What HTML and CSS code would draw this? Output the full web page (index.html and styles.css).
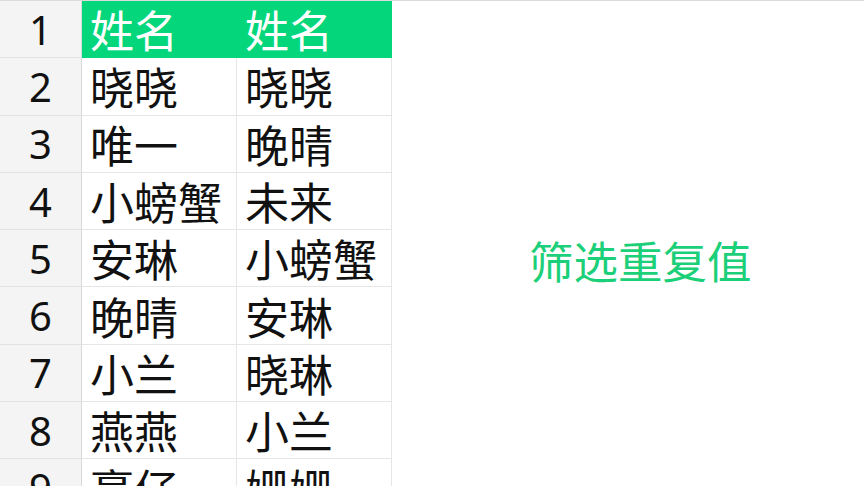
FILE: index.html
```html
<!DOCTYPE html>
<html lang="zh">
<head>
<meta charset="utf-8">
<link rel="stylesheet" href="styles.css">
</head>
<body>
<div class="page">
  <div class="sheet">
    <div class="rh">1</div><div class="c head">姓名</div><div class="c head">姓名</div>
    <div class="rh">2</div><div class="c">晓晓</div><div class="c">晓晓</div>
    <div class="rh">3</div><div class="c">唯一</div><div class="c">晚晴</div>
    <div class="rh">4</div><div class="c">小螃蟹</div><div class="c">未来</div>
    <div class="rh">5</div><div class="c">安琳</div><div class="c">小螃蟹</div>
    <div class="rh">6</div><div class="c">晚晴</div><div class="c">安琳</div>
    <div class="rh">7</div><div class="c">小兰</div><div class="c">晓琳</div>
    <div class="rh">8</div><div class="c">燕燕</div><div class="c">小兰</div>
    <div class="rh">9</div><div class="c">豪仔</div><div class="c">姗姗</div>
  </div>
  <div class="panel">
    <div class="title">筛选重复值</div>
  </div>
</div>
</body>
</html>
```
FILE: styles.css
```css
html, body {
  margin: 0;
  padding: 0;
  background: #ffffff;
  overflow: hidden;
}
.page {
  width: 864px;
  height: 486px;
  display: flex;
  border-top: 1px solid #dcdcdc;
  box-sizing: border-box;
  font-family: "Noto Sans CJK SC", "Noto Sans", sans-serif;
}
.sheet {
  display: grid;
  grid-template-columns: 82px 155px 155px;
  grid-auto-rows: 57.3px;
  width: 392px;
  flex: none;
  align-content: start;
}
.rh {
  background: #f4f4f4;
  border-right: 1px solid #dadada;
  border-bottom: 1px solid #e2e2e2;
  display: flex;
  align-items: center;
  justify-content: center;
  font-family: "Noto Sans", "DejaVu Sans", sans-serif;
  font-size: 40px;
  color: #111;
  padding-left: 0;
}
.c {
  border-right: 1px solid #e6e6e6;
  border-bottom: 1px solid #e6e6e6;
  display: flex;
  align-items: center;
  padding-left: 8px;
  font-size: 44px;
  color: #111;
  line-height: 1;
  white-space: nowrap;
  overflow: hidden;
}
.c.head {
  background: #04d67b;
  color: #ffffff;
  border-right-color: #04d67b;
  border-bottom-color: #04d67b;
}
.panel {
  flex: 1;
  display: flex;
  align-items: center;
  padding-left: 137px;
  padding-top: 34px;
  box-sizing: border-box;
}
.title {
  font-size: 44.5px;
  color: #1ccf79;
  line-height: 1;
}
```
